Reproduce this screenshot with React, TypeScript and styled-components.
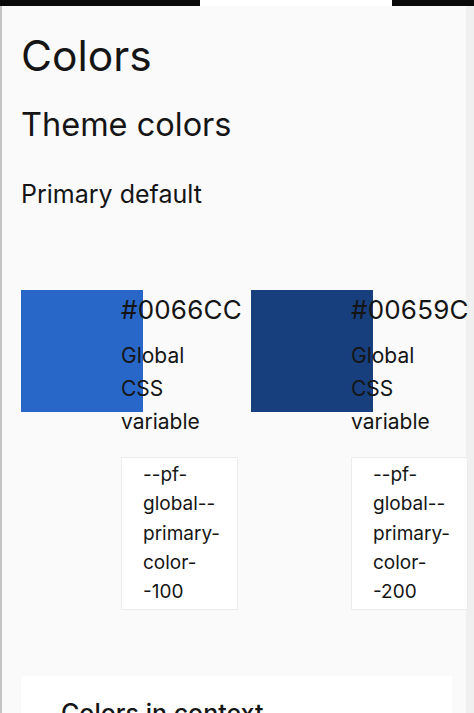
import React from 'react'
import styled, { createGlobalStyle } from 'styled-components'

const GlobalStyle = createGlobalStyle`
  html, body {
    margin: 0;
    padding: 0;
    background: #f0f0f0;
    font-family: Inter, "Noto Sans", sans-serif;
    color: #151515;
  }
`

const TopBar = styled.div`
  display: flex;
  height: 6px;
`

const BarPart = styled.div<{ $w: string; $dark?: boolean }>`
  flex: ${(p) => p.$w};
  background: ${(p) => (p.$dark ? '#0a0a0a' : '#ffffff')};
`

const Panel = styled.main`
  background: #fafafa;
  border-left: 2px solid #c4c4c4;
  margin-right: 8px;
  padding: 24px 0 0 19px;
  height: 707px;
  box-sizing: border-box;
  overflow-x: visible;
  overflow-y: clip;
`

const H1 = styled.h1`
  margin: 0;
  font-size: 42.5px;
  line-height: 1.2;
  font-weight: 400;
`

const H2 = styled.h2`
  margin: 24px 0 0;
  font-size: 32.5px;
  line-height: 1.2;
  font-weight: 400;
`

const H3 = styled.h3`
  margin: 35px 0 0;
  font-size: 25px;
  line-height: 1.2;
  font-weight: 400;
`

const SwatchGrid = styled.div`
  display: grid;
  grid-template-columns: 217px 217px;
  column-gap: 13px;
  margin-top: 81px;
`

const SwatchItem = styled.div`
  display: grid;
  grid-template-columns: 100px 117px;
  align-items: start;
`

const Swatch = styled.div<{ $color: string }>`
  width: 122px;
  height: 122px;
  background: ${(p) => p.$color};
`

const Info = styled.div`
  padding-top: 4px;
`

const Hex = styled.div`
  font-size: 26px;
  line-height: 1.2;
  letter-spacing: 0.2px;
  white-space: nowrap;
`

const Label = styled.div`
  margin-top: 14px;
  font-size: 21px;
  line-height: 33px;
  width: 80px;
`

const VarBox = styled.div`
  margin-top: 19px;
  width: 117px;
  box-sizing: border-box;
  background: #ffffff;
  border: 1px solid #ececec;
  padding: 2px 10px 2px 21px;
  font-size: 19px;
  line-height: 29.3px;
`

const ContextCard = styled.section`
  margin-top: 66px;
  width: 431px;
  background: #ffffff;
  padding: 22px 40px;
  box-sizing: border-box;
`

const CardTitle = styled.h3`
  margin: 0;
  font-size: 25px;
  line-height: 1.2;
  font-weight: 500;
`

const swatches = [
  { hex: '#0066CC', color: '#2866c7', lines: ['--pf-', 'global--', 'primary-', 'color-', '-100'] },
  { hex: '#00659C', color: '#183f7d', lines: ['--pf-', 'global--', 'primary-', 'color-', '-200'] },
]

export default function App() {
  return (
    <>
      <GlobalStyle />
      <TopBar>
        <BarPart $w="200" $dark />
        <BarPart $w="192" />
        <BarPart $w="82" $dark />
      </TopBar>
      <Panel>
        <H1>Colors</H1>
        <H2>Theme colors</H2>
        <H3>Primary default</H3>
        <SwatchGrid>
          {swatches.map((s) => (
            <SwatchItem key={s.hex}>
              <Swatch $color={s.color} />
              <Info>
                <Hex>{s.hex}</Hex>
                <Label>Global CSS variable</Label>
                <VarBox>
                  {s.lines.map((l, i) => (
                    <div key={i}>{l}</div>
                  ))}
                </VarBox>
              </Info>
            </SwatchItem>
          ))}
        </SwatchGrid>
        <ContextCard>
          <CardTitle>Colors in context</CardTitle>
        </ContextCard>
      </Panel>
    </>
  )
}
